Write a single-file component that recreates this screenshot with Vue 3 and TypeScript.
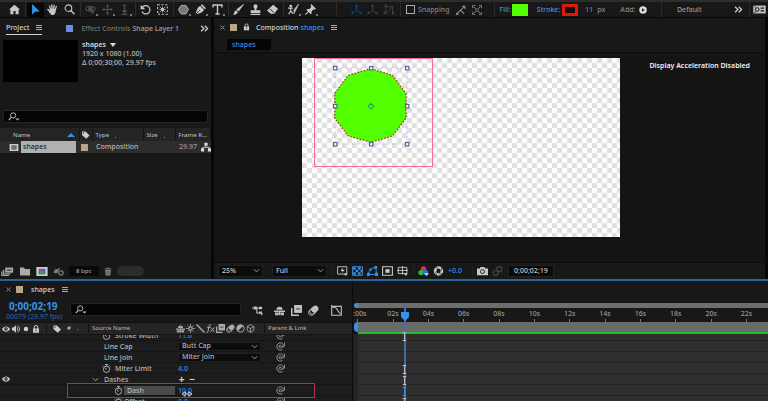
<script setup lang="ts">
import { ref } from 'vue'

interface Tool { icon: string; label: string; dim?: boolean; active?: boolean; flyout?: boolean }
interface Prop {
  name: string
  depth: number
  watch?: boolean
  value?: string
  options?: string[]
  group?: boolean
  selected?: boolean
}

const toolGroups: Tool[][] = [
  [
    { icon: 'arrow', label: 'Selection', active: true },
    { icon: 'hand', label: 'Hand' },
    { icon: 'zoom', label: 'Zoom' },
  ],
  [
    { icon: 'orbit', label: 'Orbit', dim: true, flyout: true },
    { icon: 'move', label: 'Pan camera', dim: true, flyout: true },
    { icon: 'dolly', label: 'Dolly', dim: true, flyout: true },
  ],
  [
    { icon: 'rotate', label: 'Rotate' },
    { icon: 'anchor', label: 'Pan behind' },
  ],
  [
    { icon: 'poly', label: 'Polygon', flyout: true },
    { icon: 'pen', label: 'Pen', flyout: true },
    { icon: 'type', label: 'Type', flyout: true },
  ],
  [
    { icon: 'brush', label: 'Brush' },
    { icon: 'stamp', label: 'Clone stamp' },
    { icon: 'eraser', label: 'Eraser' },
  ],
  [
    { icon: 'roto', label: 'Roto brush', flyout: true },
    { icon: 'pin', label: 'Puppet pin', flyout: true },
  ],
]

const axes: Tool[] = [
  { icon: 'axis', label: 'Local axis', active: true },
  { icon: 'axis', label: 'World axis' },
  { icon: 'axisview', label: 'View axis' },
]

const props: Prop[] = [
  { name: 'Stroke Width', depth: 1, watch: true, value: '11.0' },
  { name: 'Line Cap', depth: 1, options: ['Butt Cap', 'Round Cap', 'Projecting Cap'] },
  { name: 'Line Join', depth: 1, options: ['Miter Join', 'Round Join', 'Bevel Join'] },
  { name: 'Miter Limit', depth: 1, watch: true, value: '4.0' },
  { name: 'Dashes', depth: 1, group: true },
  { name: 'Dash', depth: 2, watch: true, value: '10.0', selected: true },
  { name: 'Offset', depth: 2, watch: true, value: '0.0' },
]

const switches = ['shy', 'sun', 'slash', 'fx', 'frames', 'blur', 'adjust', 'cube']

/* Seconds visible in the time ruler, and the current time. */
const span = 23.2
const current = 2.65
const labels = Array.from({ length: 12 }, (_, i) => (i === 0 ? '0:00s' : String(i * 2).padStart(2, '0') + 's'))
const pct = (seconds: number) => (seconds / span) * 100 + '%'

const handles = [
  [33, 10], [69, 10], [105, 10],
  [33, 48], [105, 48],
  [33, 86], [69, 86], [105, 86],
]

const snapping = ref(false)
const projectSearch = ref('')
const layerSearch = ref('')
</script>

<template>
  <svg class="sprite" aria-hidden="true">
    <symbol id="home" viewBox="0 0 16 16"><path d="M8 1 0 8h2v7h4.500v-5h3v5H14V8h2z" fill="currentColor" /></symbol>
    <symbol id="arrow" viewBox="0 0 16 16"><path d="M3 0v15.500l4.500-4.300L14 11z" fill="currentColor" /></symbol>
    <symbol id="hand" viewBox="0 0 16 16"><path d="M5 8 3.800 3M7.300 7.500 7 1.300M9.700 7.500l.6-6M12 8.500 13.500 3.500M5 12 1.300 8" stroke="currentColor" stroke-width="1.900" stroke-linecap="round" fill="none" /><path d="M4 7h9l-.6 5-2.200 4H6.500L3.500 12z" fill="currentColor" /></symbol>
    <symbol id="zoom" viewBox="0 0 16 16"><circle cx="6.500" cy="6" r="4.800" fill="none" stroke="currentColor" stroke-width="1.600" /><path d="m10 9.500 5.300 5.500" stroke="currentColor" stroke-width="2.200" /></symbol>
    <symbol id="orbit" viewBox="0 0 16 16"><ellipse cx="8" cy="7" rx="6.800" ry="3.600" fill="none" stroke="currentColor" stroke-width="1.500" /><circle cx="8" cy="7.500" r="3.400" fill="currentColor" /><path d="m9 9 5 2-4 4z" fill="currentColor" /></symbol>
    <symbol id="move" viewBox="0 0 16 16"><path d="M8 2v12M2 8h12" stroke="currentColor" stroke-width="1.600" /><path d="M8 0 5.500 3.500h5zM8 16l-2.500-3.500h5zM0 8l3.500-2.500v5zM16 8l-3.500-2.500v5z" fill="currentColor" /></symbol>
    <symbol id="dolly" viewBox="0 0 16 16"><path d="M8 1v10M4 15h8M6 2h4" stroke="currentColor" stroke-width="1.700" /><path d="m8 14-4-5h8z" fill="currentColor" /></symbol>
    <symbol id="rotate" viewBox="0 0 16 16"><path d="M3.500 5A6 6 0 1 1 3 11" fill="none" stroke="currentColor" stroke-width="1.800" /><path d="M1 1v6.500h6.500z" fill="currentColor" /></symbol>
    <symbol id="anchor" viewBox="0 0 16 16"><path d="M1 1h14v14H1z" fill="none" stroke="currentColor" stroke-width="1.600" stroke-dasharray="3 2.500" /><path d="M8 3.500v9M3.500 8h9M4 4l8 8M12 4l-8 8" stroke="currentColor" stroke-width="1" /><circle cx="8" cy="8" r="2.400" fill="currentColor" /></symbol>
    <symbol id="poly" viewBox="0 0 16 16"><path d="M4.500 2h7L15.500 8l-4 6.500h-7L.5 8z" fill="#777" stroke="currentColor" stroke-width="1.100" /></symbol>
    <symbol id="pen" viewBox="0 0 16 16"><path d="m10 0 6 6-2 1.500L8.500 2z" fill="currentColor" /><path d="M7.500 3C4 4.500 2.500 8 1 15c7-1.500 10.500-3 12-6.500z" fill="currentColor" /><path d="m1 15 6-6" stroke="#181818" stroke-width="1.200" /></symbol>
    <symbol id="type" viewBox="0 0 16 16"><path d="M1.500 5V1.500h13V5M8 1.500v13M5 14.500h6" fill="none" stroke="currentColor" stroke-width="2" /></symbol>
    <symbol id="brush" viewBox="0 0 16 16"><path d="M15.500.5 8 10.500 5.500 8z" fill="currentColor" stroke="currentColor" /><path d="M4.500 9 7 11.500C6 15 3 15.500 0 15.500 2 14 1.500 10 4.500 9z" fill="currentColor" /></symbol>
    <symbol id="stamp" viewBox="0 0 16 16"><path d="M6.800 9C7 6 5 5.500 5 3.500a3 3 0 0 1 6 0c0 2-2 2.500-1.800 5.500H15v4H1V9zM1 14h14v2H1z" fill="currentColor" /></symbol>
    <symbol id="eraser" viewBox="0 0 16 16"><path d="m9 1 7 6-5.500 7h-5L0 9.500z" fill="currentColor" /><path d="m4 7 6 5.500" stroke="#181818" stroke-width="1.200" /></symbol>
    <symbol id="roto" viewBox="0 0 16 16"><circle cx="4" cy="3" r="2" fill="currentColor" /><path d="M0 6h7M4 5v5l-3 5M4 10l3 4" stroke="currentColor" stroke-width="1.700" fill="none" /><path d="M15.500 0 11 9.500 8.500 14 9 8z" fill="currentColor" stroke="currentColor" /></symbol>
    <symbol id="pin" viewBox="0 0 16 16"><path d="m9 0 7 7-2 1.200-1.500-.4-3 3 .2 3-1.500 1.200L2 8.500l1.500-1.300 3 .1 2.500-3L8.200 2z" fill="currentColor" /><path d="m5.500 10.500-5 5" stroke="currentColor" stroke-width="1.500" /></symbol>
    <symbol id="axis" viewBox="0 0 16 16"><path d="M8 2v7l-6 4.500M8 9l6 4.500" fill="none" stroke="currentColor" stroke-width="1.300" /><path d="M8 0 6 4h4zM0 15l2-4 2 3zM16 15l-2-4-2 3z" fill="currentColor" /></symbol>
    <symbol id="axisview" viewBox="0 0 16 16"><path d="M4 1v3h11M2 13h3l9-9v9h3M4 4v9" fill="none" stroke="currentColor" stroke-width="1.300" /><path d="M2 1h3v3H2zM1 12h3v3H1zM13 12h3v3h-3z" fill="currentColor" /></symbol>
    <symbol id="snapedge" viewBox="0 0 16 16"><path d="M1 14 13 3M7 8l6 6" stroke="currentColor" stroke-width="1.700" fill="none" /><path d="M9 1h6v6zM0 13h4v3H0z" fill="currentColor" /></symbol>
    <symbol id="snapbox" viewBox="0 0 16 16"><path d="M1 5V1h4M11 1h4v4M15 11v4h-4M5 15H1v-4M3 3l3 3M13 3l-3 3M3 13l3-3M13 13l-3-3" fill="none" stroke="currentColor" stroke-width="1.500" /><path d="M6 6h4v4H6z" fill="none" stroke="currentColor" /></symbol>
    <symbol id="add" viewBox="0 0 16 16"><circle cx="8" cy="8" r="7.500" fill="currentColor" /><path d="M6 4.500v7L11.500 8z" fill="#181818" /></symbol>
    <symbol id="chevrons" viewBox="0 0 16 16"><path d="m2 3 5 5-5 5M8.500 3l5 5-5 5" fill="none" stroke="currentColor" stroke-width="2.200" /></symbol>
    <symbol id="workspace" viewBox="0 0 22 16"><path d="M0 1h22v14H0z" fill="currentColor" /><circle cx="7" cy="8" r="3.200" fill="none" stroke="#181818" stroke-width="1.800" /><path d="M13 5.500h6M13 10.500h6M2 3h2M2 13h2" stroke="#181818" stroke-width="2" /></symbol>
    <symbol id="menu" viewBox="0 0 6 5"><path d="M0 0h6v1H0zM0 2h6v1H0zM0 4h6v1H0z" fill="currentColor" /></symbol>
    <symbol id="cross" viewBox="0 0 5 5"><path d="m.5.5 4 4M4.500.5l-4 4" stroke="currentColor" /></symbol>
    <symbol id="lock" viewBox="0 0 16 16"><path d="M2 7h12v8.500H2z" fill="currentColor" /><path d="M4.500 8V4.500a3.500 3.500 0 0 1 7 0V8" fill="none" stroke="currentColor" stroke-width="2" /><path d="M8 9.500v3" stroke="#181818" stroke-width="1.800" /></symbol>
    <symbol id="search" viewBox="0 0 20 16"><circle cx="8.500" cy="6" r="4.600" fill="none" stroke="currentColor" stroke-width="1.700" /><path d="M5 9.500.8 14.500" stroke="currentColor" stroke-width="2.200" /><path d="M12.500 11.500H20L16.200 15z" fill="currentColor" /></symbol>
    <symbol id="tag" viewBox="0 0 16 16"><path d="M1 1h7l8 8-6.500 6.500L1 8z" fill="currentColor" /><circle cx="4" cy="4" r="1.300" fill="#222" /></symbol>
    <symbol id="tree" viewBox="0 0 16 16"><path d="M5.500 1h5v5h-5zM0 10h5v5H0zM11 10h5v5h-5z" fill="currentColor" /><path d="M8 5v4M2.500 11V8.500h11V11" fill="none" stroke="currentColor" stroke-width="1.300" /></symbol>
    <symbol id="comp" viewBox="0 0 20 16"><path d="M0 0h20v16H0z" fill="#cfcfcf" /><path d="M4 3h12v10H4z" fill="#667" /><circle cx="8" cy="6" r="3" fill="#d8463c" /><circle cx="12.500" cy="7" r="3" fill="#3e6fe0" /><circle cx="9.500" cy="10.500" r="3" fill="#3aa557" /></symbol>
    <symbol id="footage" viewBox="0 0 22 16"><path d="M7 1h14v9H7z" fill="currentColor" /><path d="M4 5v7h13M1 8v7h13" fill="none" stroke="currentColor" stroke-width="2.200" /><path d="M10 4h8v3h-8z" fill="#555" /></symbol>
    <symbol id="folder" viewBox="0 0 20 16"><path d="M1 1h7l2 2.500h9V15H1z" fill="currentColor" /></symbol>
    <symbol id="settings" viewBox="0 0 20 16"><path d="M1 9 12 2l-6 9zM5 3l3 8M2 5h5" fill="currentColor" stroke="currentColor" stroke-width="1.300" /><circle cx="14.500" cy="10.500" r="3.800" fill="none" stroke="currentColor" stroke-width="2" /></symbol>
    <symbol id="trash" viewBox="0 0 16 16"><path d="M1 3h14M5.500 2.500V1h5v1.500" fill="none" stroke="currentColor" stroke-width="1.600" /><path d="M2.500 5h11l-.7 11H3.200z" fill="currentColor" /><path d="M6 7v7M10 7v7" stroke="#181818" /></symbol>
    <symbol id="chev" viewBox="0 0 16 16"><path d="m2 5 6 6 6-6" fill="none" stroke="currentColor" stroke-width="2" /></symbol>
    <symbol id="preview" viewBox="0 0 18 16"><path d="M1 1h15v12H1z" fill="none" stroke="currentColor" stroke-width="1.500" /><path d="M9 2.500 6 8h3l-2 4 6-6H9.500z" fill="currentColor" /><path d="M11 12h7l-3.500 4z" fill="currentColor" /></symbol>
    <symbol id="grid" viewBox="0 0 18 16"><path d="M1 1h16v14H1z" fill="none" stroke="currentColor" stroke-width="1.600" /><path d="M2 2h4v4H2zM10 2h4v4h-4zM6 6h4v4H6zM14 6h3v4h-3zM2 10h4v4H2zM10 10h4v4h-4z" fill="currentColor" /></symbol>
    <symbol id="mask" viewBox="0 0 18 16"><path d="M2.500 13.500C3 7 6 3 14.500 2.500l1 11z" fill="none" stroke="currentColor" stroke-width="1.600" /><path d="M0 11h4.500v5H0zM13 11h5v5h-5zM12 0h4.500v4.500H12zM4 4h3.500v3.500H4z" fill="currentColor" /></symbol>
    <symbol id="region" viewBox="0 0 18 16"><path d="M1 1h16v14H1z" fill="none" stroke="currentColor" stroke-width="1.800" /><path d="M5.500 5h7v6h-7z" fill="currentColor" /></symbol>
    <symbol id="guides" viewBox="0 0 18 16"><path d="M2 2h14v10H2zM9 0v14M0 7h18" fill="none" stroke="currentColor" stroke-width="1.500" /><path d="M11 12h7l-3.500 4z" fill="currentColor" /></symbol>
    <symbol id="rgb" viewBox="0 0 18 16"><circle cx="9" cy="4.500" r="4.300" fill="#ee2e24" /><circle cx="5" cy="10.500" r="4.300" fill="#22c436" /><circle cx="12" cy="10" r="4.300" fill="#2c6cf0" /><path d="M10 11.500h8L14 16z" fill="#ddd" /></symbol>
    <symbol id="aperture" viewBox="0 0 16 16"><circle cx="8" cy="8" r="5.500" fill="none" stroke="currentColor" stroke-width="4" /><path d="m3 2 5 2M13 3l-1 5M14 12l-5 1M5 14l-2-5" stroke="#181818" stroke-width="1" /></symbol>
    <symbol id="camera" viewBox="0 0 18 16"><path d="M0 4h4.500L6 1.500h6L13.500 4H18v11H0z" fill="currentColor" /><circle cx="9" cy="9" r="3.200" fill="none" stroke="#181818" stroke-width="1.500" /></symbol>
    <symbol id="link" viewBox="0 0 16 16"><circle cx="5" cy="11" r="4" fill="none" stroke="currentColor" stroke-width="2" /><circle cx="11" cy="5" r="4" fill="none" stroke="currentColor" stroke-width="2" /></symbol>
    <symbol id="flow" viewBox="0 0 18 16"><path d="M0 4h7M6 4h6M8 4v8h5" fill="none" stroke="currentColor" stroke-width="1.800" /><path d="M3 1.500h5v5H3zM11.500 2h5v4h-5zM11.500 9.500h5v4h-5zM14 13h4l-2 3z" fill="currentColor" /></symbol>
    <symbol id="shy" viewBox="0 0 16 16"><path d="M3.500 7a4.500 4.500 0 0 1 9 0z M0 8h16v2H0zM1.500 11h5v4h-5zM9.500 11h5v4h-5zM7 10h2v5H7z" fill="currentColor" /></symbol>
    <symbol id="frames" viewBox="0 0 16 16"><path d="M4.500 0H16v11.500H4.500z" fill="currentColor" /><path d="M1 4.500V15h10.500" fill="none" stroke="currentColor" stroke-width="2.400" /><path d="M7 5.700h6.500" stroke="#444" stroke-width="1.500" /></symbol>
    <symbol id="blur" viewBox="0 0 16 16"><ellipse cx="10" cy="6" rx="5.500" ry="4.500" transform="rotate(-40 10 6)" fill="currentColor" /><ellipse cx="7.500" cy="8.500" rx="5.500" ry="4.500" transform="rotate(-40 7.500 8.500)" fill="none" stroke="currentColor" stroke-width="1.200" /><ellipse cx="5.500" cy="10.500" rx="5" ry="4.200" transform="rotate(-40 5.500 10.500)" fill="none" stroke="currentColor" stroke-width="1.200" /></symbol>
    <symbol id="graph" viewBox="0 0 16 16"><path d="M1 2h14v13H1zM0 0l4 4M3 3c8 0 6 9 12 10" fill="none" stroke="currentColor" stroke-width="1.600" /></symbol>
    <symbol id="eye" viewBox="0 0 16 16"><path d="M0 8c3.500-7 12.500-7 16 0-3.500 7-12.500 7-16 0z" fill="currentColor" /><circle cx="8" cy="8" r="3.300" fill="#111" /><circle cx="8" cy="8" r="1.300" fill="currentColor" /></symbol>
    <symbol id="speaker" viewBox="0 0 16 16"><path d="M0 5h3l5-4.500v15L3 11H0z" fill="currentColor" /><path d="M10 4.500a5 5 0 0 1 0 7M11 1.500a7 7 0 0 1 0 13" fill="none" stroke="currentColor" stroke-width="1.700" /></symbol>
    <symbol id="dot" viewBox="0 0 16 16"><circle cx="8" cy="8" r="4.500" fill="currentColor" /></symbol>
    <symbol id="sun" viewBox="0 0 16 16"><circle cx="8" cy="8" r="3" fill="none" stroke="currentColor" stroke-width="2" /><path d="M8 0v4M8 12v4M0 8h4M12 8h4M3 3l2 2M13 3l-2 2M3 13l2-2M13 13l-2-2" stroke="currentColor" stroke-width="1.500" /></symbol>
    <symbol id="slash" viewBox="0 0 16 16"><path d="m1 1 14 14" stroke="currentColor" stroke-width="2.400" /></symbol>
    <symbol id="fx" viewBox="0 0 16 16"><path d="M9 1.500C6 0 5.500 3 5 6L3.500 13c-.4 2-1.500 2.500-3 2M2 6h6M8.500 6l6.500 8.500M15.500 6 7.500 14.500" fill="none" stroke="currentColor" stroke-width="1.700" /></symbol>
    <symbol id="adjust" viewBox="0 0 16 16"><circle cx="8" cy="8" r="6.500" fill="none" stroke="currentColor" stroke-width="1.700" /><path d="M12.600 3.400A6.500 6.500 0 0 0 3.400 12.600z" fill="currentColor" /></symbol>
    <symbol id="cube" viewBox="0 0 16 16"><path d="m8 1 6 3.500v7L8 15l-6-3.500v-7zM2 4.500 8 8l6-3.500M8 8v7" fill="none" stroke="currentColor" stroke-width="1.500" /></symbol>
    <symbol id="watch" viewBox="0 0 16 16"><circle cx="8" cy="9.500" r="5.600" fill="none" stroke="currentColor" stroke-width="1.600" /><path d="M8 10 5.500 6.500M5.500 1h5M8 1v3M13 3l1.500 1.500M3 3 1.500 4.500" fill="none" stroke="currentColor" stroke-width="1.700" /></symbol>
    <symbol id="whip" viewBox="0 0 16 16"><path d="M10 8a2.300 2.300 0 1 1-2.500-2.300c3 0 3 4 5 3.800 2-4-1-8.200-4.800-8A6.500 6.500 0 1 0 11.500 13.500M15 1v7" fill="none" stroke="currentColor" stroke-width="1.500" /></symbol>
    <symbol id="ibeam" viewBox="0 0 10 20"><path d="M1 1h8M1 19h8M5 1v18" fill="none" stroke="currentColor" stroke-width="2.400" /></symbol>
    <symbol id="marker" viewBox="0 0 16 18"><path d="M0 0h16v10l-8 8-8-8z" fill="currentColor" /></symbol>
    <symbol id="scrub" viewBox="0 0 22 12"><path d="M8 6h6M0 6l7-5v10zM22 6l-7-5v10z" fill="#222" stroke="#eee" stroke-width="2" /></symbol>
  </svg>

  <div class="app">
    <header class="toolbar">
      <button class="tool home" aria-label="Home"><svg><use href="#home" /></svg></button>
      <div v-for="(group, g) in toolGroups" :key="g" class="group">
        <button
          v-for="t in group"
          :key="t.label"
          class="tool"
          :class="{ dim: t.dim, active: t.active, flyout: t.flyout }"
          :aria-label="t.label"
        ><svg><use :href="'#' + t.icon" /></svg></button>
      </div>
      <div class="group axes">
        <button v-for="t in axes" :key="t.label" class="tool" :class="{ active: t.active }" :aria-label="t.label">
          <svg><use :href="'#' + t.icon" /></svg>
        </button>
      </div>
      <div class="group snap">
        <label class="check"><input v-model="snapping" type="checkbox" />Snapping</label>
        <button class="tool" aria-label="Snap to edges"><svg><use href="#snapedge" /></svg></button>
        <button class="tool" aria-label="Snap to features"><svg><use href="#snapbox" /></svg></button>
      </div>
      <div class="group paint">
        <button class="hot">Fill:</button><button class="swatch fill" aria-label="Fill colour"></button>
        <button class="hot stroke-label">Stroke:</button><button class="swatch stroke" aria-label="Stroke colour"></button>
        <button class="hot px">11</button><span class="unit">px</span>
        <button class="add">Add: <svg><use href="#add" /></svg></button>
      </div>
      <div class="group workspace">
        <button class="ws">Default</button>
        <button class="more" aria-label="More workspaces"><svg><use href="#chevrons" /></svg></button>
        <button class="sync" aria-label="Workspace options"><svg><use href="#workspace" /></svg></button>
      </div>
    </header>

    <main class="upper">
      <section class="panel project">
        <nav class="tabs">
          <button class="tab current">Project <svg class="menu"><use href="#menu" /></svg></button>
          <button class="tab effect"><i class="chip blue"></i>Effect Controls <b>Shape Layer 1</b></button>
          <button class="more" aria-label="More panels"><svg><use href="#chevrons" /></svg></button>
        </nav>
        <div class="info">
          <div class="thumb"></div>
          <div class="facts">
            <strong>shapes <i class="caret"></i></strong>
            <p>1920 x 1080 (1.00)</p>
            <p>Δ 0;00;30;00, 29.97 fps</p>
          </div>
        </div>
        <label class="search"><svg><use href="#search" /></svg><input v-model="projectSearch" aria-label="Search project" /></label>
        <table class="items">
          <colgroup><col class="c-name" /><col class="c-tag" /><col class="c-type" /><col class="c-size" /><col class="c-rate" /></colgroup>
          <thead>
            <tr>
              <th><span class="sortable">Name <i class="sort"></i></span></th>
              <th aria-label="Label"><svg class="tag"><use href="#tag" /></svg></th>
              <th><span class="mark">Type</span></th>
              <th><span class="mark">Size</span></th>
              <th>Frame R...</th>
            </tr>
          </thead>
          <tbody>
            <tr>
              <td><span class="item"><svg><use href="#comp" /></svg><span class="item-name">shapes</span></span></td>
              <td><i class="chip tan"></i></td>
              <td>Composition</td>
              <td></td>
              <td><span class="rate">29.97 <svg><use href="#tree" /></svg></span></td>
            </tr>
          </tbody>
        </table>
        <footer class="bar project-bar">
          <button aria-label="Interpret footage"><svg class="wide"><use href="#footage" /></svg></button>
          <button aria-label="New folder"><svg><use href="#folder" /></svg></button>
          <button aria-label="New composition"><svg><use href="#comp" /></svg></button>
          <button class="mid" aria-label="Project settings"><svg><use href="#settings" /></svg></button>
          <button class="bpc">8 bpc</button>
          <button class="bin" aria-label="Delete"><svg><use href="#trash" /></svg></button>
          <span class="pill"></span>
        </footer>
      </section>

      <section class="panel composition">
        <nav class="tabs">
          <button class="close" aria-label="Close composition"><svg><use href="#cross" /></svg></button>
          <i class="chip tan"></i>
          <svg class="lock"><use href="#lock" /></svg>
          <button class="tab comp">Composition <em>shapes</em> <svg class="menu"><use href="#menu" /></svg></button>
        </nav>
        <div class="crumbs"><button class="crumb">shapes</button></div>
        <div class="viewer">
          <svg class="canvas" viewBox="0 0 318 179">
            <defs>
              <pattern id="checker" width="10" height="10" patternUnits="userSpaceOnUse">
                <path d="M0 0h10v10H0z" fill="#fff" />
                <path d="M5 0h5v5H5zM0 5h5v5H0z" fill="#dfdfdf" />
              </pattern>
            </defs>
            <path d="M0 0h318v179H0z" fill="url(#checker)" />
            <path d="M33 10h72v76H33z" fill="none" stroke="#b4b4dc" stroke-dasharray="3 2" stroke-width=".6" />
            <path
              d="M69 10.700 90.300 17.300 104 35.300v25L90.300 78 69 84.300 46.300 78 32.700 60.300v-25L46.300 17.300z"
              fill="#51ff00" stroke="#a03c10" stroke-width="1.300" stroke-dasharray="1.600 1.600"
            />
            <path d="m69 45.500 2.800 2.800-2.800 2.800-2.800-2.800z" fill="none" stroke="#23966e" />
            <rect
              v-for="(h, i) in handles" :key="i" :x="h[0] - 1.500" :y="h[1] - 1.500" width="3.400" height="3.400"
              fill="#fff" stroke="#5b6296" stroke-width="1.200"
            />
            <path d="M12.500.5h118v108h-118z" fill="none" stroke="#f56b96" />
          </svg>
          <p class="notice">Display Acceleration Disabled</p>
        </div>
        <footer class="bar comp-bar">
          <span class="pick zoomlevel"><select aria-label="Magnification"><option>25%</option><option>50%</option><option>100%</option></select><svg><use href="#chev" /></svg></span>
          <span class="pick res"><select aria-label="Resolution"><option>Full</option><option>Half</option><option>Quarter</option></select><svg><use href="#chev" /></svg></span>
          <div class="views">
            <button aria-label="Fast previews"><svg><use href="#preview" /></svg></button>
            <button class="on" aria-label="Transparency grid"><svg><use href="#grid" /></svg></button>
            <button class="on" aria-label="Mask visibility"><svg><use href="#mask" /></svg></button>
            <button aria-label="Region of interest"><svg><use href="#region" /></svg></button>
            <button aria-label="Guides"><svg><use href="#guides" /></svg></button>
          </div>
          <div class="views">
            <button aria-label="Channels"><svg><use href="#rgb" /></svg></button>
            <button aria-label="Reset exposure"><svg><use href="#aperture" /></svg></button>
            <button class="hot exposure">+0.0</button>
          </div>
          <div class="views snaps">
            <button aria-label="Take snapshot"><svg><use href="#camera" /></svg></button>
            <button class="off" aria-label="Show snapshot"><svg><use href="#link" /></svg></button>
          </div>
          <button class="time">0;00;02;19</button>
        </footer>
      </section>
    </main>

    <section class="timeline">
      <div class="layers">
        <nav class="tabs">
          <button class="close" aria-label="Close timeline"><svg><use href="#cross" /></svg></button>
          <i class="chip tan"></i>
          <button class="tab">shapes <svg class="menu"><use href="#menu" /></svg></button>
        </nav>
        <div class="controls">
          <div class="clock"><button class="hot now">0;00;02;19</button><small>00079 (29.97 fps)</small></div>
          <label class="search"><svg><use href="#search" /></svg><input v-model="layerSearch" aria-label="Search layers" /></label>
          <button class="flow" aria-label="Mini-flowchart"><svg><use href="#flow" /></svg></button>
          <button aria-label="Hide shy layers"><svg><use href="#shy" /></svg></button>
          <button aria-label="Frame blending"><svg><use href="#frames" /></svg></button>
          <button aria-label="Motion blur"><svg><use href="#blur" /></svg></button>
          <button class="graph" aria-label="Graph editor"><svg><use href="#graph" /></svg></button>
        </div>
        <div class="line head">
          <div class="features">
            <svg><use href="#eye" /></svg><svg><use href="#speaker" /></svg><svg><use href="#dot" /></svg><svg><use href="#lock" /></svg>
            <span class="labels"><svg><use href="#tag" /></svg><span>#</span><span>.</span></span>
          </div>
          <div class="title">Source Name</div>
          <div class="switches"><svg v-for="s in switches" :key="s"><use :href="'#' + s" /></svg></div>
          <div class="title parent">Parent &amp; Link</div>
        </div>
        <div class="rows">
          <div v-for="p in props" :key="p.name" class="line" :class="{ chosen: p.selected }">
            <div class="features"><svg v-if="p.group"><use href="#eye" /></svg></div>
            <div class="name" :class="{ deep: p.depth === 2 }">
              <span class="twirl"><svg v-if="p.group"><use href="#chev" /></svg></span>
              <svg v-if="p.watch" class="watch"><use href="#watch" /></svg>
              <span class="label">{{ p.name }}</span>
            </div>
            <div class="value">
              <span v-if="p.options" class="pick">
                <select :aria-label="p.name"><option v-for="o in p.options" :key="o">{{ o }}</option></select>
                <svg><use href="#chev" /></svg>
              </span>
              <button v-if="p.value" class="hot">{{ p.value }}</button>
              <template v-if="p.group"><button class="pm" aria-label="Add dash">+</button><button class="pm" aria-label="Remove dash">−</button></template>
              <svg v-if="p.selected" class="cursor"><use href="#scrub" /></svg>
            </div>
            <div class="whip"><svg v-if="!p.group"><use href="#whip" /></svg></div>
            <div v-if="p.selected" class="callout"></div>
          </div>
        </div>
      </div>

      <div class="time-area">
        <div class="navigator"></div>
        <div class="ruler"><span v-for="l in labels" :key="l" class="tick" :style="{ flexBasis: pct(2) }">{{ l }}</span></div>
        <div class="workarea"></div>
        <div class="tracks"><div v-for="p in props" :key="p.name" class="track"></div></div>
        <div class="playhead-lane">
          <div class="playhead" :style="{ left: pct(current) }">
            <svg class="marker"><use href="#marker" /></svg>
            <div class="keys">
              <svg v-for="p in props" :key="p.name" :class="{ blank: p.options, picked: p.selected }"><use href="#ibeam" /></svg>
            </div>
          </div>
        </div>
      </div>
    </section>
  </div>
</template>

<style>
body { margin: 0; background: #000; }
</style>

<style scoped>
.sprite { position: absolute; width: 0; height: 0; }
.app {
  display: flex; flex-direction: column; height: 100vh; overflow: hidden;
  background: #0c0c0c; color: #b8b8b8;
  font: 500 7px/9px "Noto Sans", "Open Sans", sans-serif;
}
.app *, .app *::before, .app *::after { box-sizing: border-box; }
button, input, select {
  appearance: none; margin: 0; padding: 0; border: 0; border-radius: 0;
  background: none; color: inherit; font: inherit; text-align: left; white-space: nowrap;
}
p { margin: 0; }
svg { display: block; flex: none; width: 10px; height: 10px; }
.hot { color: #3692e8; }

/* Tool bar */
.toolbar { display: flex; flex: none; height: 18px; background: #181818; border-top: 2px solid #2c2e2c; border-bottom: 1px solid #060606; }
.tool { display: flex; flex: none; align-items: center; justify-content: center; width: 17px; height: 14px; color: #c8c8c8; position: relative; }
.tool svg { width: 11px; height: 11px; }
.tool.home { width: 25px; padding-left: 3px; }
.tool.dim { color: #505050; }
.tool.active { background: #070707; color: #3692e8; }
.tool.flyout::after { content: ""; position: absolute; right: 1px; bottom: 1px; width: 2px; height: 2px; background: #777; }
.group { display: flex; align-items: center; padding-left: 1px; margin-right: 2px; border-left: 1px solid #2b2b2b; }
.axes { margin-left: 15px; padding-left: 11px; }
.axes .tool { width: 16px; color: #444; }
.axes .active { background: #111a22; color: #24486c; }
.snap { margin-left: 2px; padding-left: 5px; color: #808080; }
.check { display: flex; align-items: center; gap: 3px; margin-right: 3px; }
.check input { width: 9px; height: 9px; border: 1px solid #aaa; }
.check input:checked { background: #3692e8; }
.snap .tool { width: 16px; color: #8a8a8a; }
.snap .tool svg { width: 10px; height: 10px; }
.paint { margin-left: 7px; padding-left: 5px; }
.swatch { width: 16px; height: 12px; margin-left: 1px; }
.fill { background: #51ff00; }
.stroke { border: 3px solid #dc1a08; background: #1a0a08; margin-left: 2px; }
.stroke-label { margin-left: 9px; }
.px { margin: 0 4px 0 7px; }
.unit { color: #888; }
.add { display: flex; align-items: center; gap: 3px; margin-left: 15px; color: #888; }
.add svg { width: 8px; height: 8px; color: #ddd; }
.workspace { margin: 0 2px 0 auto; padding-left: 15px; color: #999; }
.ws { width: 57px; }
.more svg { width: 9px; height: 9px; color: #d0d0d0; }
.sync { display: flex; align-items: center; height: 15px; margin-left: 6px; padding-left: 3px; border-left: 1px solid #2b2b2b; color: #c4c4c4; }
.sync svg { width: 13px; height: 9px; }

/* Panels */
.upper { display: grid; grid-template-columns: 211px 1fr; gap: 3px; flex: none; padding-right: 3px; background: #070707; }
.panel { display: flex; flex-direction: column; min-width: 0; background: #181818; }
.tabs { display: flex; flex: none; align-items: center; height: 18px; }
.tab { display: flex; align-items: center; gap: 2px; color: #d4d4d4; }
.tab em { color: #3692e8; font-style: normal; }
.tab b { font-weight: 500; color: #a4a4a4; }
.menu { width: 6px; height: 5px; margin-left: 5px; color: #aaa; }
.chip { display: block; flex: none; width: 7px; height: 7px; }
.tan { background: #b8a687; }
.blue { background: #7388e4; margin-right: 6px; }
.close { margin-right: 5px; color: #888; }
.close svg { width: 5px; height: 5px; }

.project .tabs { align-items: flex-start; padding: 3px 2px 0 6px; }
.project .tab { height: 14px; }
.project .current { border-bottom: 1px solid #d0d0d0; }
.effect { margin-left: 24px; color: #747474; }
.project .more { margin: 3px 0 0 auto; }
.info { display: grid; grid-template-columns: 75px 1fr; gap: 4px; padding: 4px 3px 0; }
.thumb { height: 42px; background: #000; }
.facts { line-height: 9px; }
.facts strong { display: flex; align-items: center; gap: 4px; color: #d8d8d8; font-weight: 600; }
.caret { border: 3px solid transparent; border-top: 4px solid #ddd; border-bottom: 0; }
.search { display: flex; align-items: center; gap: 3px; height: 13px; background: #050505; border: 1px solid #242424; border-radius: 2px; padding-left: 4px; }
.search svg { width: 12px; height: 9px; color: #bbb; }
.search input { flex: 1; min-width: 0; height: 9px; outline: 0; }
.project .search { margin: 28px 3px 5px; }
.items { width: 100%; table-layout: fixed; border-collapse: collapse; }
.c-name { width: 79px; }
.c-tag { width: 13px; }
.c-type { width: 51px; }
.c-size { width: 32px; }
.items th { height: 13px; padding: 0 0 0 3px; background: #242424; font-size: 6px; font-weight: 500; text-align: left; white-space: nowrap; border-right: 1px solid #151515; line-height: 8px; }
.items th:first-child { padding-left: 13px; }
.items td { height: 12px; padding: 0 0 0 4px; background: #2d2d2d; line-height: 8px; }
.items td:first-child { padding-left: 9px; }
.items td:nth-child(2) { padding-left: 2px; }
.items th:nth-child(2) { padding-left: 1px; }
.items .tag { width: 9px; height: 8px; color: #ccc; }
.mark { display: flex; align-items: flex-end; gap: 6px; }
.mark::after { content: ""; width: 1px; height: 1px; margin-bottom: 1px; background: #888; }
.sortable { display: flex; align-items: center; justify-content: space-between; padding-right: 4px; }
.sort { border: 4px solid transparent; border-bottom: 4px solid #3692e8; border-top: 0; }
.item { display: flex; align-items: center; gap: 2px; }
.item svg { height: 7px; }
.item-name { flex: 1; margin-right: 3px; padding: 2px; background: #b0b0b0; color: #222; }
.rate { display: flex; align-items: center; gap: 4px; color: #999; }
.rate svg { color: #ddd; }
.bar { display: flex; align-items: center; flex: none; height: 17px; margin-top: auto; border-top: 1px solid #0a0a0a; }
.project-bar { gap: 5px; padding: 0 0 0 1px; border-top-color: #181818; color: #aaa; }
.project-bar svg { width: 12px; height: 9px; }
.project-bar .wide { width: 13px; }
.project-bar .mid svg { width: 11px; color: #888; }
.project-bar .bin svg { width: 8px; color: #888; }
.bpc { width: 30px; height: 10px; padding-left: 7px; background: #090909; font-size: 6px; }
.pill { width: 27px; height: 10px; border-radius: 5px; background: #2c2c2c; }

.composition .tabs { padding-left: 6px; border-left: 0; }
.lock { width: 7px; height: 8px; margin: 0 6px 0 6px; color: #ccc; }
.crumbs { display: flex; align-items: center; height: 17px; padding-left: 13px; border-bottom: 1px solid #0c0c0c; }
.crumb { width: 44px; height: 11px; padding-left: 5px; background: #050505; color: #3692e8; }
.viewer { display: flex; align-items: flex-start; justify-content: space-between; padding: 5px 15px 25px 88px; background: #141414; }
.canvas { width: 71%; height: auto; }
.notice { padding-top: 3px; color: #f0f0f0; font-weight: 600; white-space: nowrap; }
.pick { display: flex; position: relative; align-items: center; height: 10px; background: #0c0c0c; border: 1px solid #202020; }
.pick select { width: 100%; padding: 0 12px 0 3px; line-height: 8px; }
.pick svg { position: absolute; right: 2px; width: 7px; height: 7px; pointer-events: none; color: #aaa; }
.comp-bar { gap: 5px; padding: 0 0 1px 4px; color: #c8c8c8; }
.comp-bar .pick { height: 12px; }
.zoomlevel { width: 45px; margin-right: 4px; }
.res { width: 55px; }
.views { display: flex; align-items: center; gap: 4px; padding-left: 4px; border-left: 1px solid #242424; }
.views svg { width: 11px; }
.views .on { color: #3692e8; }
.exposure { width: 19px; }
.snaps .off { color: #444; }
.comp-bar .time { height: 12px; padding: 0 5px; background: #090909; border: 1px solid #222; line-height: 8px; }

/* Timeline */
.timeline { display: grid; grid-template-columns: 353px 1fr; flex: 1; min-height: 0; background: #181818; border-top: 2px solid #2b6298; }
.layers { display: flex; flex-direction: column; min-height: 0; min-width: 0; border-right: 1px solid #0a0a0a; }
.timeline .tabs { height: 17px; padding: 0 0 0 6px; }
.timeline .tab { margin-left: 8px; }
.controls { display: flex; align-items: center; flex: none; height: 24px; padding-right: 10px; color: #c0c0c0; }
.clock { width: 70px; padding-left: 6px; white-space: nowrap; }
.now { display: block; padding-left: 3px; font-size: 10px; font-weight: 700; line-height: 12px; }
.clock small { display: block; font-size: 7px; line-height: 9px; color: #285c90; }
.controls .search { width: 171px; margin-bottom: 2px; }
.controls svg { width: 11px; height: 11px; }
.controls .search svg { width: 12px; height: 9px; }
.controls .flow { margin-left: 11px; }
.controls button + button { margin-left: 6px; }
.controls .flow + button { margin-left: 11px; }
.controls button + .graph { margin-left: auto; }
.line { display: grid; position: relative; grid-template-columns: 88px 88px 88px 1fr; align-items: center; height: 11px; flex: none; border-bottom: 1px solid #151515; }
.features { display: flex; align-items: center; gap: 2px; height: 100%; padding-left: 2px; color: #ccc; }
.features svg { width: 8px; height: 8px; }
.labels { display: flex; align-items: center; gap: 6px; margin-left: 4px; padding-left: 6px; border-left: 1px solid #111; }
.head { height: 13px; background: #252525; border-top: 1px solid #101010; font-size: 6px; color: #a8a8a8; }
.title { padding-left: 3px; border-left: 1px solid #111; }
.switches { display: flex; gap: 1px; color: #aaa; }
.switches svg { width: 9px; height: 9px; }
.rows { flex: 1; min-height: 0; overflow: hidden; background: #1c1c1c; }
.rows .line:first-child { margin-top: -5px; }
.name { display: flex; align-items: center; padding-left: 3px; white-space: nowrap; }
.name.deep { padding-left: 15px; }
.twirl { width: 13px; }
.twirl svg { width: 7px; height: 7px; margin-left: 1px; }
.watch { width: 9px; height: 9px; margin: 0 4px 0 -2px; color: #bbb; }
.deep .watch { margin-right: 1px; }
.chosen .label { width: 51px; padding-left: 3px; background: #4a4a4a; }
.value { display: flex; align-items: center; gap: 4px; padding-left: 2px; position: relative; }
.value .pick { width: 83px; height: 9px; }
.pm { width: 7px; font-size: 10px; font-weight: 700; line-height: 9px; text-align: center; color: #ccc; }
.cursor { position: absolute; left: 6px; top: 5px; width: 10px; height: 6px; }
.whip { padding-left: 12px; }
.whip svg { width: 9px; height: 9px; color: #aaa; }
.callout { position: absolute; z-index: 2; left: 67px; right: 37px; top: -2px; bottom: -3px; border: 1px solid #b72a5e; }
.value .hot { line-height: 9px; }

.time-area { display: flex; position: relative; flex-direction: column; min-width: 0; overflow: hidden; padding-left: 5px; margin-top: 22px; background: #181818; }
.navigator { flex: none; height: 5px; background: #6e6e6e; }
.ruler { display: flex; flex: none; height: 14px; padding-top: 1px; }
.tick { flex: none; display: flex; flex-direction: column; justify-content: space-between; align-items: center; color: #999; line-height: 9px; }
.tick:first-child { margin-left: -18px; }
.tick::after { content: ""; width: 1px; height: 3px; background: #777; }
.workarea { flex: none; height: 12px; background: #696969; border-bottom: 2px solid #1fbd2b; }
.navigator::before, .workarea::before { content: ""; display: block; width: 4px; height: 100%; margin-left: -4px; background: #3692e8; border-radius: 4px 0 0 4px; }
.tracks { flex: 1; min-height: 0; overflow: hidden; background: #2f2f2f; box-shadow: -5px 0 #242424; }
.track { height: 11px; border-bottom: 1px solid #222; }
.track:first-child { margin-top: -4px; }
.playhead-lane { position: absolute; inset: 0 0 0 5px; pointer-events: none; }
.playhead { position: absolute; top: 0; bottom: 0; width: 8px; margin-left: -4px; color: #3692e8; background: linear-gradient(#3f6ea8, #3f6ea8) center / 2px 100% no-repeat; }
.marker { width: 8px; height: 9px; margin-top: 9px; }
.keys { display: flex; flex-direction: column; align-items: center; margin-top: 10px; color: #b8bcc8; }
.keys svg { width: 5px; height: 9px; margin: 1px 0; }
.keys .blank { visibility: hidden; }
.keys .picked { color: #3692e8; }
</style>
